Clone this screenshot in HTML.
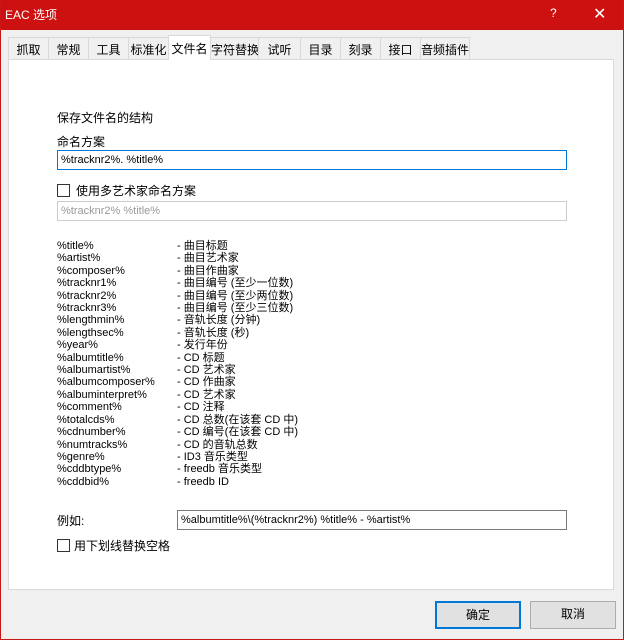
<!DOCTYPE html>
<html><head><meta charset="utf-8"><style>
*{margin:0;padding:0;box-sizing:border-box}
body{width:624px;height:640px;background:#f0f0f0;font-family:"Liberation Sans","Noto Sans CJK SC",sans-serif;font-size:12px;color:#000;position:relative;overflow:hidden}
.win{position:absolute;left:0;top:0;width:624px;height:640px;border:1px solid #c91717;border-top:none}
.title{position:absolute;left:0;top:0;width:624px;height:30px;background:#cd1111;color:#fff}
.title .t{position:absolute;left:5px;top:6px;font-size:12px}
.title .q{position:absolute;left:550px;top:6px;font-size:12px}
.title .x{position:absolute;left:593px;top:4px;font-size:16px;font-weight:200}
.tab{position:absolute;top:37px;height:23px;border:1px solid #d9d9d9;border-bottom:none;background:#f0f0f0;padding-top:3px;font-size:12px;white-space:nowrap;text-align:center;overflow:hidden}
.tab.a{top:35px;height:25px;background:#fff;z-index:2;padding-top:4px}
.panel{position:absolute;left:8px;top:59px;width:606px;height:531px;background:#fff;border:1px solid #d9d9d9}
.abs{position:absolute}
.inp{position:absolute;height:20px;border:1px solid #7a7a7a;background:#fff;padding:2px 3px;font-size:11px;line-height:14px}
.cb{position:absolute;width:13px;height:13px;border:1px solid #333;background:#fff}
.row{position:absolute;font-size:11px;line-height:12px;white-space:nowrap}
.btn{position:absolute;top:601px;width:86px;height:28px;background:#e1e1e1;border:1px solid #adadad;text-align:center;line-height:25px}
</style></head><body>
<div class="title"><span class="t">EAC 选项</span><span class="q">?</span><span class="x">✕</span></div>
<div class="win"></div>
<div class="tab" style="left:8px;width:41px">抓取</div>
<div class="tab" style="left:48px;width:41px">常规</div>
<div class="tab" style="left:88px;width:41px">工具</div>
<div class="tab" style="left:128px;width:41px">标准化</div>
<div class="tab a" style="left:168px;width:43px">文件名</div>
<div class="tab" style="left:210px;width:49px">字符替换</div>
<div class="tab" style="left:258px;width:43px">试听</div>
<div class="tab" style="left:300px;width:41px">目录</div>
<div class="tab" style="left:340px;width:41px">刻录</div>
<div class="tab" style="left:380px;width:41px">接口</div>
<div class="tab" style="left:420px;width:50px">音频插件</div>
<div class="panel"></div>
<div class="abs" style="left:57px;top:109px">保存文件名的结构</div>
<div class="abs" style="left:57px;top:133px">命名方案</div>
<div class="inp" style="left:57px;top:150px;width:510px;border-color:#0078d7">%tracknr2%. %title%</div>
<div class="cb" style="left:57px;top:184px"></div>
<div class="abs" style="left:76px;top:182px">使用多艺术家命名方案</div>
<div class="inp" style="left:57px;top:201px;width:510px;border-color:#ccc;color:#999">%tracknr2% %title%</div>
<div class="row" style="left:57px;top:240px;line-height:12.4px">%title%<br>%artist%<br>%composer%<br>%tracknr1%<br>%tracknr2%<br>%tracknr3%<br>%lengthmin%<br>%lengthsec%<br>%year%<br>%albumtitle%<br>%albumartist%<br>%albumcomposer%<br>%albuminterpret%<br>%comment%<br>%totalcds%<br>%cdnumber%<br>%numtracks%<br>%genre%<br>%cddbtype%<br>%cddbid%</div>
<div class="row" style="left:177px;top:240px;line-height:12.4px">- 曲目标题<br>- 曲目艺术家<br>- 曲目作曲家<br>- 曲目编号 (至少一位数)<br>- 曲目编号 (至少两位数)<br>- 曲目编号 (至少三位数)<br>- 音轨长度 (分钟)<br>- 音轨长度 (秒)<br>- 发行年份<br>- CD 标题<br>- CD 艺术家<br>- CD 作曲家<br>- CD 艺术家<br>- CD 注释<br>- CD 总数(在该套 CD 中)<br>- CD 编号(在该套 CD 中)<br>- CD 的音轨总数<br>- ID3 音乐类型<br>- freedb 音乐类型<br>- freedb ID</div>
<div class="abs" style="left:57px;top:512px">例如:</div>
<div class="inp" style="left:177px;top:510px;width:390px;color:#000">%albumtitle%\(%tracknr2%) %title% - %artist%</div>
<div class="cb" style="left:57px;top:539px"></div>
<div class="abs" style="left:74px;top:537px">用下划线替换空格</div>
<div class="btn" style="left:435px;border:2px solid #0078d7">确定</div>
<div class="btn" style="left:530px">取消</div>
</body></html>
